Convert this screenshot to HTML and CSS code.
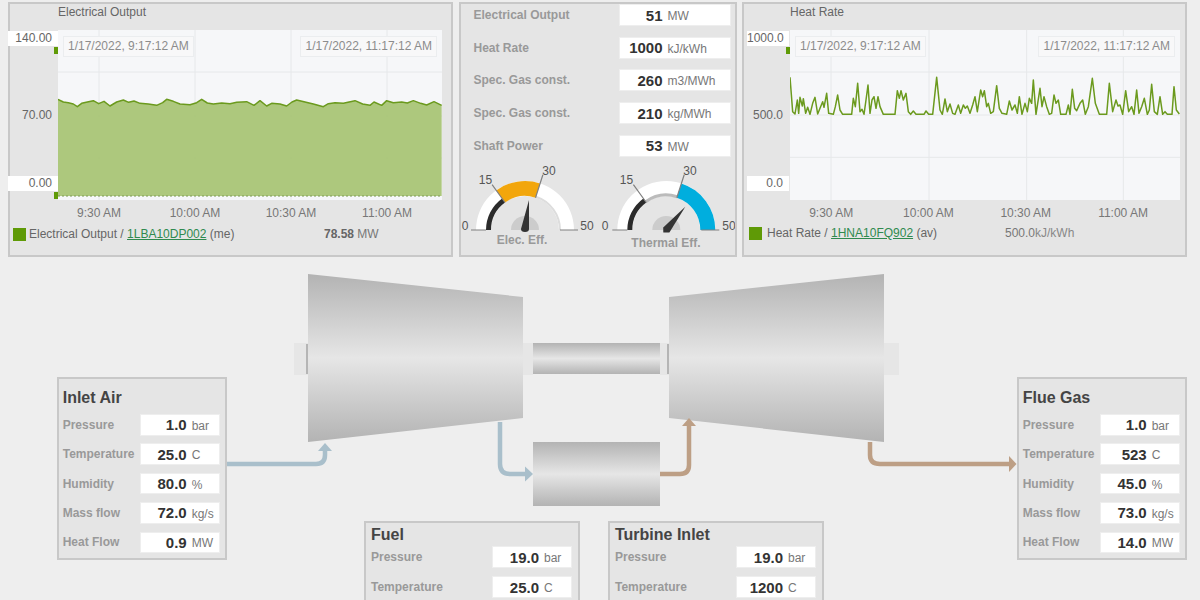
FILE: index.html
```html
<!DOCTYPE html>
<html lang="en">
<head>
    <meta charset="UTF-8">
    <title>Gas Turbine Overview</title>
    <link rel="stylesheet" href="styles.css">
</head>
<body>
    <div class="top-row">
        <!-- Electrical output trend -->
        <section class="panel chart">
            <div class="chart-title">Electrical Output</div>
            <div class="chart-body">
                <div class="y-axis">
                    <span class="y-label boxed">140.00</span>
                    <span class="y-label mid">70.00</span>
                    <span class="y-label boxed low">0.00</span>
                </div>
                <div class="plot">
                    <svg class="plot-svg" viewBox="174 90 1152 510" preserveAspectRatio="none">
                        <path class="grid-line" d="M297 90V600M585 90V600M873 90V600M1161 90V600M174 216H1326M174 348H1326M174 474H1326"/>
                        <path class="area" d="M174 298L190 306 205 308 220 312 232 320 245 310 262 306 280 302 296 311 312 304 330 318 350 306 370 300 386 307 402 303 420 310 445 312 470 316 488 308 500 298 520 304 540 312 570 314 590 308 605 298 622 309 640 312 665 309 690 311 710 307 740 305 762 316 780 302 800 318 815 310 840 312 860 318 876 306 890 300 915 306 940 312 970 320 985 311 1005 308 1030 310 1065 302 1088 312 1110 316 1122 306 1145 316 1160 302 1180 308 1205 306 1222 309 1240 302 1262 310 1280 315 1302 305 1325 316V588H174Z"/>
                        <path class="line" d="M174 298L190 306 205 308 220 312 232 320 245 310 262 306 280 302 296 311 312 304 330 318 350 306 370 300 386 307 402 303 420 310 445 312 470 316 488 308 500 298 520 304 540 312 570 314 590 308 605 298 622 309 640 312 665 309 690 311 710 307 740 305 762 316 780 302 800 318 815 310 840 312 860 318 876 306 890 300 915 306 940 312 970 320 985 311 1005 308 1030 310 1065 302 1088 312 1110 316 1122 306 1145 316 1160 302 1180 308 1205 306 1222 309 1240 302 1262 310 1280 315 1302 305 1325 316"/>
                        <path class="zero-line" d="M174 588H1326"/>
                    </svg>
                    <span class="marker marker-top"></span>
                    <span class="marker marker-bottom"></span>
                    <span class="time-box time-start">1/17/2022, 9:17:12 AM</span>
                    <span class="time-box time-end">1/17/2022, 11:17:12 AM</span>
                </div>
            </div>
            <div class="x-axis">
                <span>9:30 AM</span><span>10:00 AM</span><span>10:30 AM</span><span>11:00 AM</span>
            </div>
            <div class="legend">
                <span class="swatch"></span>
                <span class="legend-name">Electrical Output / <a href="#">1LBA10DP002</a> (me)</span>
                <span class="legend-value"><b>78.58</b> MW</span>
            </div>
        </section>

        <!-- Key values and efficiency gauges -->
        <section class="panel summary">
            <div class="summary-row"><span class="label">Electrical Output</span><span class="box"><b class="num">51</b><span class="unit">MW</span></span></div>
            <div class="summary-row"><span class="label">Heat Rate</span><span class="box"><b class="num">1000</b><span class="unit">kJ/kWh</span></span></div>
            <div class="summary-row"><span class="label">Spec. Gas const.</span><span class="box"><b class="num">260</b><span class="unit">m3/MWh</span></span></div>
            <div class="summary-row"><span class="label">Spec. Gas const.</span><span class="box"><b class="num">210</b><span class="unit">kg/MWh</span></span></div>
            <div class="summary-row"><span class="label">Shaft Power</span><span class="box"><b class="num">53</b><span class="unit">MW</span></span></div>
            <svg class="gauges" viewBox="460 160 274 95">
                <g transform="translate(524 230)">
                    <path class="g-band" d="M-49 0A49 49 0 0 1 49 0H34A34 34 0 0 0 -34 0Z"/>
                    <path class="g-thin" d="M10.8 -33.3A35 35 0 0 1 35 0"/>
                    <path class="g-orange" d="M-28.8 -39.6A49 49 0 0 1 15.1 -46.6L10.5 -32.3A34 34 0 0 0 -20 -27.5Z"/>
                    <path class="g-black" d="M-39 0A39 39 0 0 1 -22.9 -31.6L-20 -27.5A34 34 0 0 0 -34 0Z"/>
                    <path class="g-tick" d="M-20 -27.5L-32.9 -45.3M10.5 -32.3L17.9 -55.2M-54 0H-39M35 0H53"/>
                    <path class="g-hub" d="M-14 0A14 14 0 0 1 14 0Z"/>
                    <path class="g-needle" d="M4 -30L4 -1Q4 2 0 2Q-4 2 -4 -1Z"/>
                </g>
                <g transform="translate(665.3 230)">
                    <path class="g-band" d="M-49 0A49 49 0 0 1 49 0H34A34 34 0 0 0 -34 0Z"/>
                    <path class="g-mid" d="M-20.6 -28.3A35 35 0 0 1 10.8 -33.3"/>
                    <path class="g-blue" d="M15.1 -46.6A49 49 0 0 1 49 0H34A34 34 0 0 0 10.5 -32.3Z"/>
                    <path class="g-black" d="M-39 0A39 39 0 0 1 -22.9 -31.6L-20 -27.5A34 34 0 0 0 -34 0Z"/>
                    <path class="g-tick" d="M-20 -27.5L-32.9 -45.3M10.5 -32.3L17.9 -55.2M-54 0H-39M35 0H53"/>
                    <path class="g-hub" d="M-14 0A14 14 0 0 1 14 0Z"/>
                    <path class="g-needle" d="M19 -23.3L3.1 2.5L-3 2.5L-3.1 -2.5Z"/>
                </g>
                <text class="g-num" x="464" y="230" text-anchor="middle">0</text>
                <text class="g-num" x="484.5" y="184" text-anchor="middle">15</text>
                <text class="g-num" x="548" y="175" text-anchor="middle">30</text>
                <text class="g-num" x="586" y="230" text-anchor="middle">50</text>
                <text class="g-num" x="604" y="230" text-anchor="middle">0</text>
                <text class="g-num" x="625.5" y="184" text-anchor="middle">15</text>
                <text class="g-num" x="689" y="175" text-anchor="middle">30</text>
                <text class="g-num" x="728" y="230" text-anchor="middle">50</text>
                <text class="g-name" x="521" y="244" text-anchor="middle">Elec. Eff.</text>
                <text class="g-name" x="665" y="247" text-anchor="middle">Thermal Eff.</text>
            </svg>
        </section>

        <!-- Heat rate trend -->
        <section class="panel chart chart-heat">
            <div class="chart-title">Heat Rate</div>
            <div class="chart-body">
                <div class="y-axis">
                    <span class="y-label boxed">1000.0</span>
                    <span class="y-label mid">500.0</span>
                    <span class="y-label boxed low">0.0</span>
                </div>
                <div class="plot">
                    <svg class="plot-svg" viewBox="150 90 1170 510" preserveAspectRatio="none">
                        <path class="grid-line" d="M273 90V600M567 90V600M860 90V600M1150 90V600M150 216H1320M150 345H1320M150 472H1320"/>
                        <polyline class="line" points="150,232 158,335 165,342 172,300 176,340 180,292 187,318 190,296 197,340 203,322 210,343 218,310 225,292 233,342 240,325 248,305 252,322 260,280 266,340 280,343 286,320 293,285 300,330 308,343 335,343 340,295 346,320 353,250 360,335 366,328 372,343 378,300 384,255 390,340 396,300 402,290 408,325 414,290 420,320 430,343 465,343 472,272 478,295 483,272 490,300 498,280 505,335 512,343 520,333 528,343 552,343 558,333 566,343 578,343 590,232 600,330 607,343 615,297 622,335 630,312 638,340 645,343 655,315 662,340 670,315 676,325 682,318 690,340 698,315 705,290 712,335 722,270 728,290 733,272 740,320 745,310 752,340 760,335 770,257 778,325 786,340 800,343 808,303 816,330 825,315 832,340 838,290 846,343 855,310 862,335 868,295 875,310 880,240 888,343 900,265 906,320 912,290 920,320 928,343 935,340 942,285 948,310 955,300 962,343 978,343 985,315 990,343 997,268 1004,325 1010,332 1020,310 1028,300 1036,343 1045,320 1057,235 1066,310 1078,343 1100,343 1108,250 1118,335 1128,300 1134,318 1140,315 1148,343 1157,272 1166,335 1175,320 1182,343 1190,270 1197,340 1205,320 1213,295 1222,343 1228,330 1235,253 1243,335 1252,343 1260,290 1268,343 1275,335 1282,343 1296,343 1302,260 1309,330 1318,342"/>
                    </svg>
                    <span class="marker marker-top"></span>
                    <span class="time-box time-start">1/17/2022, 9:17:12 AM</span>
                    <span class="time-box time-end">1/17/2022, 11:17:12 AM</span>
                </div>
            </div>
            <div class="x-axis">
                <span>9:30 AM</span><span>10:00 AM</span><span>10:30 AM</span><span>11:00 AM</span>
            </div>
            <div class="legend">
                <span class="swatch"></span>
                <span class="legend-name">Heat Rate / <a href="#">1HNA10FQ902</a> (av)</span>
                <span class="legend-value">500.0<span class="legend-unit">kJ/kWh</span></span>
            </div>
        </section>
    </div>

    <div class="diagram">
        <!-- Turbine drawing, in page coordinates -->
        <svg class="plant" viewBox="0 257 1200 343">
            <defs>
                <linearGradient id="metal" x1="0" y1="0" x2="0" y2="1">
                    <stop offset="0" stop-color="#b3b3b3"/>
                    <stop offset="0.5" stop-color="#e6e6e6"/>
                    <stop offset="1" stop-color="#b3b3b3"/>
                </linearGradient>
            </defs>
            <rect class="stub" x="294" y="343" width="14" height="32"/>
            <rect class="stub" x="521" y="343" width="12" height="32"/>
            <rect class="stub" x="660" y="343" width="9" height="32"/>
            <rect class="stub" x="884" y="343" width="15" height="32"/>
            <rect class="collar" x="306" y="344" width="2" height="30"/>
            <rect class="collar" x="521" y="344" width="2" height="30"/>
            <rect class="collar" x="667" y="344" width="2" height="30"/>
            <rect class="collar" x="882" y="344" width="2" height="30"/>
            <polygon class="metal" points="308,274 523,297 523,418 308,442"/>
            <polygon class="metal" points="669,297 884,274 884,442 669,418"/>
            <rect class="metal" x="533" y="343" width="127" height="31"/>
            <rect class="metal" x="533" y="442" width="127" height="64"/>

            <path class="pipe pipe-air" d="M227 464H316Q325 464 325 455V450"/>
            <polygon class="head-air" points="325,443 332,451 318,451"/>
            <path class="pipe pipe-air" d="M500 422V464Q500 474 510 474H526"/>
            <polygon class="head-air" points="533,474 525,466.5 525,481.5"/>
            <path class="pipe pipe-gas" d="M660 474H680Q689 474 689 465V425"/>
            <polygon class="head-gas" points="689,418 696,426 682,426"/>
            <path class="pipe pipe-gas" d="M870 442V455Q870 464 880 464H1009"/>
            <polygon class="head-gas" points="1016.5,464 1009,456 1009,472"/>
        </svg>

        <div class="card card-inlet">
            <h3>Inlet Air</h3>
            <div class="card-row"><span class="label">Pressure</span><span class="box"><b class="num">1.0</b><span class="unit">bar</span></span></div>
            <div class="card-row"><span class="label">Temperature</span><span class="box"><b class="num">25.0</b><span class="unit">C</span></span></div>
            <div class="card-row"><span class="label">Humidity</span><span class="box"><b class="num">80.0</b><span class="unit">%</span></span></div>
            <div class="card-row"><span class="label">Mass flow</span><span class="box"><b class="num">72.0</b><span class="unit">kg/s</span></span></div>
            <div class="card-row"><span class="label">Heat Flow</span><span class="box"><b class="num">0.9</b><span class="unit">MW</span></span></div>
        </div>

        <div class="card card-flue">
            <h3>Flue Gas</h3>
            <div class="card-row"><span class="label">Pressure</span><span class="box"><b class="num">1.0</b><span class="unit">bar</span></span></div>
            <div class="card-row"><span class="label">Temperature</span><span class="box"><b class="num">523</b><span class="unit">C</span></span></div>
            <div class="card-row"><span class="label">Humidity</span><span class="box"><b class="num">45.0</b><span class="unit">%</span></span></div>
            <div class="card-row"><span class="label">Mass flow</span><span class="box"><b class="num">73.0</b><span class="unit">kg/s</span></span></div>
            <div class="card-row"><span class="label">Heat Flow</span><span class="box"><b class="num">14.0</b><span class="unit">MW</span></span></div>
        </div>

        <div class="card card-wide card-fuel">
            <h3>Fuel</h3>
            <div class="card-row"><span class="label">Pressure</span><span class="box"><b class="num">19.0</b><span class="unit">bar</span></span></div>
            <div class="card-row"><span class="label">Temperature</span><span class="box"><b class="num">25.0</b><span class="unit">C</span></span></div>
        </div>

        <div class="card card-wide card-turbine">
            <h3>Turbine Inlet</h3>
            <div class="card-row"><span class="label">Pressure</span><span class="box"><b class="num">19.0</b><span class="unit">bar</span></span></div>
            <div class="card-row"><span class="label">Temperature</span><span class="box"><b class="num">1200</b><span class="unit">C</span></span></div>
        </div>
    </div>
</body>
</html>
```

FILE: styles.css
```css
html, body {
    height: 600px;
    overflow: hidden;
}
body {
    margin: 0;
    background-color: #eeeeee;
    font-family: "Liberation Sans", Arial, sans-serif;
    font-size: 12px;
    color: #666;
}
.top-row {
    display: flex;
    gap: 5.5px;
    height: 255px;
    padding: 2px 0 0 8px;
}
.panel {
    box-sizing: border-box;
    height: 255px;
    background-color: #e5e5e5;
    border: 2px solid #c8c8c8;
}

/* trend charts */
.chart {
    width: 445px;
}
.chart-title {
    height: 26px;
    padding-left: 48px;
    line-height: 17px;
}
.chart-body {
    display: flex;
    height: 170px;
}
.y-axis {
    display: flex;
    flex-direction: column;
    align-items: flex-start;
    flex: none;
    width: 48px;
    padding-top: 1px;
}
.y-label {
    box-sizing: border-box;
    width: 50px;
    height: 15px;
    margin-left: -2px;
    padding-right: 6px;
    line-height: 15px;
    text-align: right;
}
.y-label.boxed {
    background-color: #fff;
}
.y-label.mid {
    margin-top: 62px;
}
.y-label.low {
    margin-top: 53px;
}
.plot {
    position: relative;
    width: 384px;
    height: 170px;
    background-color: #f6f7f9;
}
.plot-svg {
    display: block;
    width: 100%;
    height: 100%;
}
.grid-line {
    fill: none;
    stroke: #e6e8ea;
    stroke-width: 3;
}
.area {
    fill: #a9c576;
    opacity: 0.95;
}
.line {
    fill: none;
    stroke: #6b9a1e;
    stroke-width: 4.5;
    stroke-linejoin: round;
}
.zero-line {
    fill: none;
    stroke: #7d9a55;
    stroke-width: 3;
    stroke-dasharray: 6 6;
}
.marker {
    position: absolute;
    left: -4px;
    width: 4px;
    height: 7px;
    background-color: #5f9a06;
}
.marker-top {
    top: 17px;
}
.marker-bottom {
    top: 162px;
}
.time-box {
    position: absolute;
    top: 6px;
    box-sizing: border-box;
    height: 21px;
    padding: 0 4px;
    border: 1px solid #ebedef;
    background-color: #f8f8f9;
    color: #8c8c8c;
    line-height: 19px;
    white-space: nowrap;
}
.time-start {
    left: 5px;
}
.time-end {
    right: 5px;
}
.x-axis {
    display: grid;
    grid-template-columns: repeat(4, 96px);
    margin-left: 41px;
    height: 24px;
    line-height: 26px;
    text-align: center;
    color: #777;
}
.legend {
    display: flex;
    align-items: center;
    height: 20px;
    padding-left: 3px;
}
.swatch {
    flex: none;
    width: 13px;
    height: 13px;
    margin-right: 3px;
    background-color: #5f9a06;
}
.legend-name {
    width: 295px;
}
.legend-name a {
    color: #2f8a4f;
}
.legend-value {
    color: #777;
}
.legend-value b {
    color: #666;
}
.chart-heat {
    width: 445px;
}
.chart-heat .chart-title {
    padding-left: 46px;
}
.chart-heat .y-axis {
    width: 46px;
}
.chart-heat .y-label {
    width: 42px;
    margin-left: 3px;
}
.chart-heat .plot {
    width: 390px;
}
.chart-heat .x-axis {
    grid-template-columns: repeat(4, 97.3px);
    margin-left: 38.5px;
}
.chart-heat .legend {
    margin-top: -1px;
    padding-left: 5px;
}
.chart-heat .swatch {
    margin-right: 5px;
}
.chart-heat .legend-name {
    width: 238px;
}
.legend-unit {
    color: #888;
}

/* summary column */
.summary {
    width: 278px;
    display: flex;
    flex-direction: column;
    gap: 10.7px;
}
.summary-row {
    display: flex;
    justify-content: space-between;
    align-items: center;
    flex: none;
    height: 22px;
    padding: 0 4px 0 13px;
}
.summary-row .num {
    width: 43px;
}
.label {
    font-weight: bold;
    color: #999;
}
.box {
    box-sizing: border-box;
    display: flex;
    align-items: center;
    gap: 5px;
    background-color: #fff;
    border: 1px solid #eeeeee;
    height: 22px;
}
.summary-row .box {
    width: 112px;
}
.num {
    flex: none;
    font-size: 15px;
    text-align: right;
    color: #333;
}
.unit {
    color: #777;
    padding-top: 2px;
}
.gauges {
    display: block;
    flex: none;
    width: 274px;
    height: 95px;
    margin-top: -7.2px;
}
.g-band {
    fill: #fff;
}
.g-orange {
    fill: #f2a60c;
}
.g-blue {
    fill: #00aede;
}
.g-black {
    fill: #2b2b2b;
}
.g-thin {
    fill: none;
    stroke: #dddddd;
    stroke-width: 2;
}
.g-mid {
    fill: none;
    stroke: #bbbbbb;
    stroke-width: 3;
}
.g-tick {
    fill: none;
    stroke: #808080;
    stroke-width: 1.2;
}
.g-hub {
    fill: #cccccc;
}
.g-needle {
    fill: #333;
}
.g-num {
    font-size: 12px;
    fill: #555;
}
.g-name {
    font-size: 12px;
    font-weight: bold;
    fill: #999;
}

/* plant diagram */
.diagram {
    position: relative;
    height: 343px;
    overflow: hidden;
}
.plant {
    position: absolute;
    top: 0;
    left: 0;
    width: 1200px;
    height: 343px;
}
.metal {
    fill: url(#metal);
}
.stub {
    fill: #e6e6e6;
}
.collar {
    fill: #b5b5b5;
}
.pipe {
    fill: none;
    stroke-width: 4.5;
}
.pipe-air {
    stroke: #a9bfcb;
}
.pipe-gas {
    stroke: #bd9f85;
}
.head-air {
    fill: #a9bfcb;
}
.head-gas {
    fill: #bd9f85;
}
.card {
    position: absolute;
    top: 120px;
    box-sizing: border-box;
    width: 170px;
    height: 183px;
    padding: 0 5px 0 4px;
    background-color: #e5e5e5;
    border: 2px solid #c8c8c8;
}
.card h3 {
    margin: 0;
    height: 35px;
    font-size: 16px;
    line-height: 38px;
    color: #444;
}
.card-row {
    display: flex;
    justify-content: space-between;
    align-items: center;
    height: 21.5px;
    margin-bottom: 7.9px;
}
.card-row .box {
    width: 80px;
    height: 21.5px;
}
.card-row .num {
    width: 46px;
}
.card-inlet {
    left: 56.7px;
}
.card-flue {
    left: 1016.7px;
}
.card-wide {
    top: 264px;
    width: 216px;
    height: 100px;
    padding-left: 5px;
    padding-right: 6px;
}
.card-wide h3 {
    height: 23px;
    line-height: 24px;
}
.card-wide .card-row {
    height: 22px;
    margin-bottom: 8px;
}
.card-fuel {
    left: 364px;
}
.card-turbine {
    left: 608px;
}
```
